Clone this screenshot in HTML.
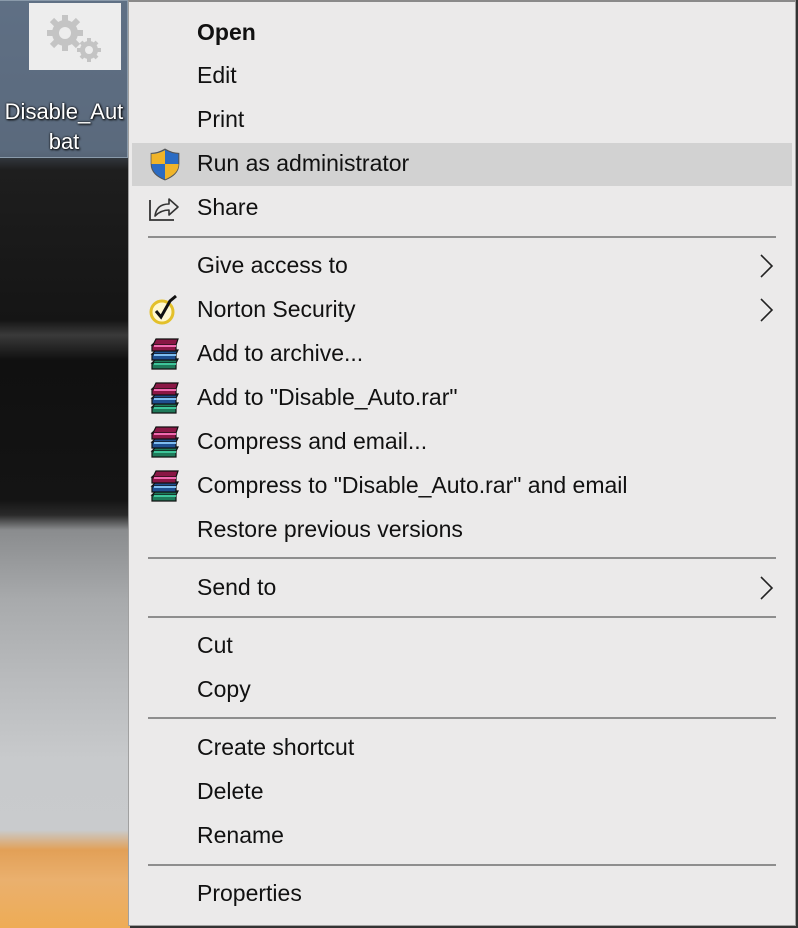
<!DOCTYPE html>
<html><head><meta charset="utf-8"><style>
*{margin:0;padding:0;box-sizing:border-box}
body{width:798px;height:928px;overflow:hidden;position:relative;font-family:"Liberation Sans",sans-serif;background:#333}
.bg{position:absolute;left:0;top:0;width:130px;height:928px;background:linear-gradient(180deg,#4a5563 0px,#3e4650 150px,#1e1e1e 170px,#151515 320px,#3a3a3a 335px,#101010 360px,#141414 500px,#2a2a2a 515px,#8a8c8e 530px,#a8aaac 600px,#b9bbbd 680px,#c8cacc 760px,#c9cbcd 830px,#e2a057 850px,#eab06e 880px,#eeac55 928px)}
.sel{position:absolute;left:0;top:0;width:128px;height:158px;background:rgba(110,130,155,0.6);border:1px solid #8a9aaa;border-left:none}
.thumb{position:absolute;left:29px;top:3px;width:92px;height:67px;background:#ededed}
.lbl{position:absolute;left:0;top:97px;width:128px;text-align:center;color:#fff;font-size:22px;line-height:30px;text-shadow:0 0 2px #000,1px 1px 2px #000;white-space:nowrap;overflow:hidden}
.menu{position:absolute;left:128px;top:0;width:668px;height:926px;background:#ebeaea;border:1px solid #a0a0a0;border-top:2px solid #8a8a8a}
.hl{position:absolute;left:132px;top:143px;width:660px;height:43px;background:#d2d2d2}
.t{position:absolute;left:197px;font-size:23px;color:#111;line-height:26px;white-space:nowrap}
.sep{position:absolute;left:148px;width:628px;height:2px;background:#8e8e8e}
.arr{position:absolute;left:758px}
.ic{position:absolute;left:148px}
</style></head><body>
<div class="bg"></div>
<div class="sel"></div>
<div class="thumb"><svg width="92" height="67" viewBox="0 0 92 67">
<g fill="#c4c4c4"><circle cx="36" cy="30" r="13"/><circle cx="60" cy="47" r="9"/></g>
<g stroke="#c4c4c4" stroke-width="6"><path d="M36 12v36M18 30h36M23 17l26 26M49 17L23 43"/></g>
<g stroke="#c4c4c4" stroke-width="4"><path d="M60 35v24M48 47h24M52 39l16 16M68 39L52 55"/></g>
<circle cx="36" cy="30" r="6" fill="#ededed"/><circle cx="60" cy="47" r="4" fill="#ededed"/></svg></div>
<div class="lbl">Disable_Aut<br>bat</div>
<div class="menu"></div>
<div class="hl"></div>
<div class="t" style="top:19px;font-weight:bold">Open</div>
<div class="t" style="top:62px">Edit</div>
<div class="t" style="top:106px">Print</div>
<div class="t" style="top:150px">Run as administrator</div>
<div class="t" style="top:194px">Share</div>
<div class="sep" style="top:236px"></div>
<div class="t" style="top:252px">Give access to</div>
<div class="t" style="top:296px">Norton Security</div>
<div class="t" style="top:340px">Add to archive...</div>
<div class="t" style="top:384px">Add to "Disable_Auto.rar"</div>
<div class="t" style="top:428px">Compress and email...</div>
<div class="t" style="top:472px">Compress to "Disable_Auto.rar" and email</div>
<div class="t" style="top:516px">Restore previous versions</div>
<div class="sep" style="top:557px"></div>
<div class="t" style="top:574px">Send to</div>
<div class="sep" style="top:616px"></div>
<div class="t" style="top:632px">Cut</div>
<div class="t" style="top:676px">Copy</div>
<div class="sep" style="top:717px"></div>
<div class="t" style="top:734px">Create shortcut</div>
<div class="t" style="top:778px">Delete</div>
<div class="t" style="top:822px">Rename</div>
<div class="sep" style="top:864px"></div>
<div class="t" style="top:880px">Properties</div>
<svg class="arr" style="top:253px" width="16" height="26"><path d="M3 2l11 11L3 24" fill="none" stroke="#222" stroke-width="1.6"/></svg>
<svg class="arr" style="top:297px" width="16" height="26"><path d="M3 2l11 11L3 24" fill="none" stroke="#222" stroke-width="1.6"/></svg>
<svg class="arr" style="top:575px" width="16" height="26"><path d="M3 2l11 11L3 24" fill="none" stroke="#222" stroke-width="1.6"/></svg>
<svg class="ic" style="top:147px" width="34" height="34" viewBox="0 0 32 32">
<path d="M16 2C11 5 7 6 3 6v10c0 8 6 12 13 15 7-3 13-7 13-15V6c-4 0-8-1-13-4z" fill="#2b6cc4" stroke="#555" stroke-width="1"/>
<path d="M16 3v13H3.2V6.5C7 6.5 11 5.5 16 3z" fill="#f0b429"/><path d="M16 16h12.8c0 7-5 11-12.8 14.5z" fill="#f0b429"/></svg>
<svg class="ic" style="top:194px" width="32" height="28" viewBox="0 0 32 28">
<path d="M2 6v20h24" fill="none" stroke="#333" stroke-width="1.8"/>
<path d="M7 22c1-8 6-12 14-12V5l9 8-9 8v-5c-6 0-10 2-14 6z" fill="none" stroke="#333" stroke-width="1.6" stroke-linejoin="round"/></svg>
<svg class="ic" style="top:294px" width="32" height="32" viewBox="0 0 32 32">
<circle cx="14" cy="18" r="11" fill="#fff8d0" stroke="#e3c02a" stroke-width="3"/>
<path d="M8 17l5 6 9-16 6-5" fill="none" stroke="#111" stroke-width="3"/></svg>
<svg class="ic" style="top:337px" width="34" height="34" viewBox="0 0 34 34"><g stroke="#111" stroke-width="1.2">
<path d="M4 26h24v6H4zM6 24l2-2h22l-2 4H4z" fill="#1f7a5a"/><path d="M6 27h22" stroke="#3ec59a" stroke-width="2"/>
<path d="M4 17h24v6H4zM6 15l2-2h22l-2 4H4z" fill="#1f4f8f"/><path d="M6 18h22" stroke="#7fbdf0" stroke-width="2"/>
<path d="M4 8h24v6H4zM6 6l2-4h22l-2 6H4z" fill="#8a1745"/><path d="M6 9h22" stroke="#f06ab0" stroke-width="2"/></g></svg>
<svg class="ic" style="top:381px" width="34" height="34" viewBox="0 0 34 34"><g stroke="#111" stroke-width="1.2">
<path d="M4 26h24v6H4zM6 24l2-2h22l-2 4H4z" fill="#1f7a5a"/><path d="M6 27h22" stroke="#3ec59a" stroke-width="2"/>
<path d="M4 17h24v6H4zM6 15l2-2h22l-2 4H4z" fill="#1f4f8f"/><path d="M6 18h22" stroke="#7fbdf0" stroke-width="2"/>
<path d="M4 8h24v6H4zM6 6l2-4h22l-2 6H4z" fill="#8a1745"/><path d="M6 9h22" stroke="#f06ab0" stroke-width="2"/></g></svg>
<svg class="ic" style="top:425px" width="34" height="34" viewBox="0 0 34 34"><g stroke="#111" stroke-width="1.2">
<path d="M4 26h24v6H4zM6 24l2-2h22l-2 4H4z" fill="#1f7a5a"/><path d="M6 27h22" stroke="#3ec59a" stroke-width="2"/>
<path d="M4 17h24v6H4zM6 15l2-2h22l-2 4H4z" fill="#1f4f8f"/><path d="M6 18h22" stroke="#7fbdf0" stroke-width="2"/>
<path d="M4 8h24v6H4zM6 6l2-4h22l-2 6H4z" fill="#8a1745"/><path d="M6 9h22" stroke="#f06ab0" stroke-width="2"/></g></svg>
<svg class="ic" style="top:469px" width="34" height="34" viewBox="0 0 34 34"><g stroke="#111" stroke-width="1.2">
<path d="M4 26h24v6H4zM6 24l2-2h22l-2 4H4z" fill="#1f7a5a"/><path d="M6 27h22" stroke="#3ec59a" stroke-width="2"/>
<path d="M4 17h24v6H4zM6 15l2-2h22l-2 4H4z" fill="#1f4f8f"/><path d="M6 18h22" stroke="#7fbdf0" stroke-width="2"/>
<path d="M4 8h24v6H4zM6 6l2-4h22l-2 6H4z" fill="#8a1745"/><path d="M6 9h22" stroke="#f06ab0" stroke-width="2"/></g></svg>
</body></html>
